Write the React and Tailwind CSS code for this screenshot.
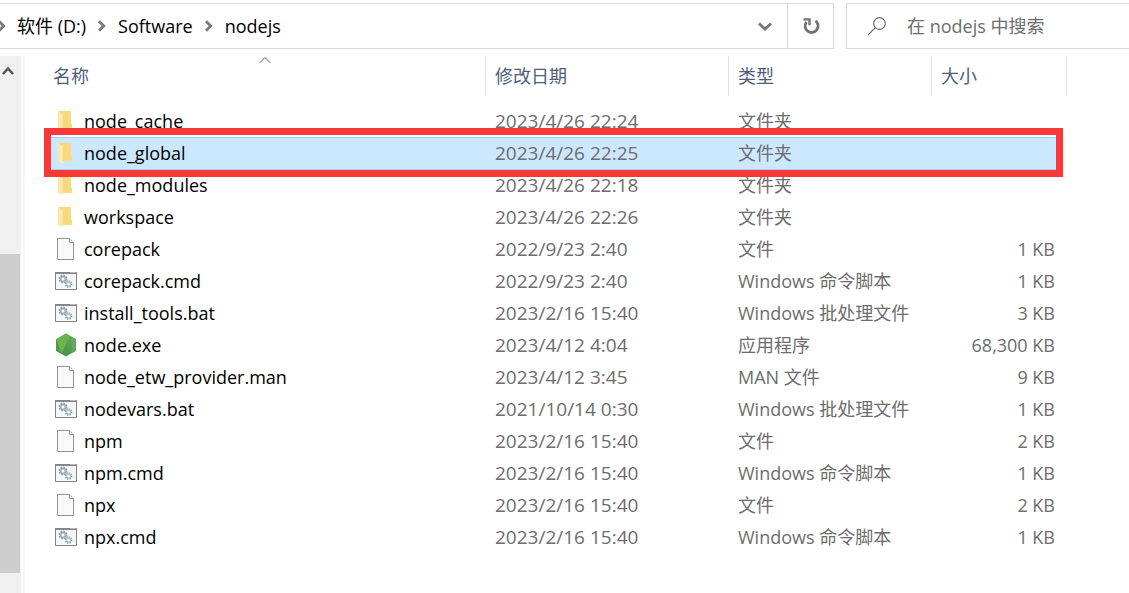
import { useState } from 'react';
import clsx from 'clsx';

const FILES = [
  { name: 'node_cache', date: '2023/4/26 22:24', type: '文件夹', icon: 'folder' },
  { name: 'node_global', date: '2023/4/26 22:25', type: '文件夹', icon: 'folder', selected: true },
  { name: 'node_modules', date: '2023/4/26 22:18', type: '文件夹', icon: 'folder' },
  { name: 'workspace', date: '2023/4/26 22:26', type: '文件夹', icon: 'folder' },
  { name: 'corepack', date: '2022/9/23 2:40', type: '文件', size: '1 KB', icon: 'file' },
  { name: 'corepack.cmd', date: '2022/9/23 2:40', type: 'Windows 命令脚本', size: '1 KB', icon: 'script' },
  { name: 'install_tools.bat', date: '2023/2/16 15:40', type: 'Windows 批处理文件', size: '3 KB', icon: 'script' },
  { name: 'node.exe', date: '2023/4/12 4:04', type: '应用程序', size: '68,300 KB', icon: 'node' },
  { name: 'node_etw_provider.man', date: '2023/4/12 3:45', type: 'MAN 文件', size: '9 KB', icon: 'file' },
  { name: 'nodevars.bat', date: '2021/10/14 0:30', type: 'Windows 批处理文件', size: '1 KB', icon: 'script' },
  { name: 'npm', date: '2023/2/16 15:40', type: '文件', size: '2 KB', icon: 'file' },
  { name: 'npm.cmd', date: '2023/2/16 15:40', type: 'Windows 命令脚本', size: '1 KB', icon: 'script' },
  { name: 'npx', date: '2023/2/16 15:40', type: '文件', size: '2 KB', icon: 'file' },
  { name: 'npx.cmd', date: '2023/2/16 15:40', type: 'Windows 命令脚本', size: '1 KB', icon: 'script' },
];

const FolderIcon = () => (
  <svg width="22" height="24" viewBox="0 0 22 24" aria-hidden="true">
    <defs>
      <linearGradient id="folderBack" x1="0" x2="1">
        <stop offset="0" stopColor="#f5d67c" />
        <stop offset="1" stopColor="#fadb86" />
      </linearGradient>
      <linearGradient id="folderFlap" x1="0" x2="1">
        <stop offset="0" stopColor="#fde5a0" />
        <stop offset="1" stopColor="#ffedbb" />
      </linearGradient>
    </defs>
    <path d="M4 2h12v12l1 1v5H4z" fill="url(#folderBack)" />
    <path d="M3 2l4.500 3v17.500L3 20z" fill="url(#folderFlap)" />
  </svg>
);

const FileIcon = () => (
  <svg width="22" height="24" viewBox="0 0 22 24" aria-hidden="true">
    <path d="M2.500 1.500h12l4 4v17h-16z" fill="#f9f9f9" stroke="#959595" />
    <path d="M14.500 1.500v4h4" fill="#fff" stroke="#959595" />
  </svg>
);

const ScriptIcon = () => (
  <svg width="22" height="24" viewBox="0 0 22 24" aria-hidden="true">
    <path d="M0.500 3.500h21v17h-21z" fill="#f6f6f6" stroke="#858585" />
    <path d="M0 3h22v2H0z" fill="#858585" />
    <path d="M15.500 3.500h1M17.500 3.500h1M19.500 3.500h1" stroke="#e4e4e4" />
    <circle cx="8" cy="10" r="3.700" fill="none" stroke="#8b959c" strokeWidth="1.400" strokeDasharray="1.500 1.400" />
    <circle cx="8" cy="10" r="2.500" fill="#fff" stroke="#a3adb3" strokeWidth="1.800" />
    <circle cx="13.500" cy="15" r="3.200" fill="none" stroke="#8199a8" strokeWidth="1.300" strokeDasharray="1.300 1.200" />
    <circle cx="13.500" cy="15" r="2.100" fill="#fff" stroke="#a9bfcc" strokeWidth="1.500" />
  </svg>
);

const NodeIcon = () => (
  <svg width="22" height="24" viewBox="0 0 22 24" aria-hidden="true">
    <defs>
      <linearGradient id="nodeFace" x1="0" y1="1" x2="1" y2="0">
        <stop offset="0" stopColor="#3f8b3d" />
        <stop offset="1" stopColor="#6cad5c" />
      </linearGradient>
    </defs>
    <path d="M11 0.500l10 5.800v11.400L11 23.500 1 17.700V6.300z" fill="url(#nodeFace)" />
    <path d="M11 0.500l4 2.300L6.500 20.900 1 6.300z" fill="#6bb34b" />
    <path d="M1 6.300l5.500 14.600L1 17.700z" fill="#4c9a41" />
    <path d="M21 6.300v11.400l-3 1.700L15 2.800z" fill="#6aa565" />
  </svg>
);

const ICONS = { folder: FolderIcon, file: FileIcon, script: ScriptIcon, node: NodeIcon };

const Crumb = () => (
  <svg width="8" height="12" viewBox="0 0 8 12" fill="none" stroke="#7a7a7a" strokeWidth="2.800" aria-hidden="true">
    <path d="M1 1.200L5.800 6 1 10.800" />
  </svg>
);

const AddressBar = () => (
  <div className="flex min-w-0 flex-1 border border-l-0 border-[#d9d9d9]">
    <nav className="flex min-w-0 flex-1 items-center overflow-hidden whitespace-nowrap text-black">
      <span className="-ml-0.5 mr-[11px]"><Crumb /></span>
      <a href="#d">软件 (D:)</a>
      <span className="mx-3"><Crumb /></span>
      <a href="#software">Software</a>
      <span className="mx-3"><Crumb /></span>
      <a href="#nodejs">nodejs</a>
    </nav>
    <button type="button" aria-label="以前的位置" className="flex w-11 items-center justify-center">
      <svg width="14" height="9" viewBox="0 0 14 9" fill="none" stroke="#767676" strokeWidth="2.800">
        <path d="M1 1.500l6 5.500 6-5.500" />
      </svg>
    </button>
    <button type="button" aria-label="刷新" className="flex w-[46px] items-center justify-center border-l border-[#d9d9d9]">
      <svg width="18" height="18" viewBox="0 0 18 18" fill="none" stroke="#737373" strokeWidth="2.800">
        <path d="M13.500 3.800A6.500 6.500 0 1 1 4.500 5" />
        <path d="M1.500 2.400h6v5.800" strokeWidth="2.400" />
      </svg>
    </button>
  </div>
);

const SearchBox = () => {
  const [query, setQuery] = useState('');

  return (
    <label className="flex w-[283px] items-center gap-5 border border-r-0 border-[#d9d9d9] pl-5">
      <svg width="20" height="20" viewBox="0 0 20 20" fill="none" stroke="#6d6d6d" strokeWidth="1.200" className="shrink-0">
        <circle cx="12.500" cy="7.500" r="5.800" />
        <path d="M8.300 11.700L1 19" />
      </svg>
      <input
        type="text"
        aria-label="搜索"
        placeholder="在 nodejs 中搜索"
        value={query}
        onChange={(e) => setQuery(e.target.value)}
        className="min-w-0 flex-1 outline-none placeholder:text-[#6d6d6d]"
      />
    </label>
  );
};

const HeaderCell = ({ label, sorted, className }) => (
  <th className={clsx('relative p-0 pb-[9px] text-left font-normal', className)}>
    {sorted && (
      <svg width="12" height="7" viewBox="0 0 12 7" fill="none" stroke="#666" className="absolute top-px left-1/2 -translate-x-1/2">
        <path d="M0.500 6L6 0.500 11.500 6" />
      </svg>
    )}
    <button type="button" className="h-10 w-full border-r border-[#e2e2e2] pl-[9px] text-left text-[#4c607a]">
      {label}
    </button>
  </th>
);

const FileRow = ({ file }) => {
  const Icon = ICONS[file.icon];

  return (
    <tr className={clsx('h-8', file.selected && 'relative z-10')}>
      <td className="p-0 pl-[11px]">
        {file.selected && (
          <>
            <span className="absolute top-0 right-[11px] -bottom-px left-[7px] -z-10 border-y border-[#99d1ff] bg-[#cce8ff]" />
            <span className="pointer-events-none absolute -top-[9px] right-1 -bottom-2 left-0 z-10 border-7 border-[#fb3838]" />
          </>
        )}
        <div className="flex items-center gap-[7px] text-black">
          <Icon />
          <span>{file.name}</span>
        </div>
      </td>
      <td className="p-0 pl-[9px] text-[19px]">{file.date}</td>
      <td className="p-0 pl-[9px]">{file.type}</td>
      <td className="p-0 pr-3 text-right">{file.size}</td>
    </tr>
  );
};

const App = () => (
  <div className="flex h-screen flex-col overflow-hidden bg-white pt-[3px] font-['Open_Sans','Noto_Sans_CJK_SC',sans-serif] text-[18px] leading-8 text-[#6d6d6d]">
    <header className="flex h-[46px] shrink-0 gap-3">
      <AddressBar />
      <SearchBox />
    </header>

    <div className="mt-[7px] flex min-h-0 flex-1">
      <div className="flex w-[21px] shrink-0 flex-col bg-[#f0f0f0] pt-2.5 pr-px pb-5">
        <button type="button" aria-label="向上滚动" className="flex justify-center">
          <svg width="12" height="10" viewBox="0 0 12 10" fill="none" stroke="#555" strokeWidth="2.500" className="mr-1">
            <path d="M1 8l5-5.500L11 8" />
          </svg>
        </button>
        <div className="min-h-0 flex-[178]" />
        <div className="min-h-0 flex-[319] bg-[#cdcdcd]" />
      </div>
      <div className="ml-0.5 w-0.5 shrink-0 bg-[#f5f5f5]" />

      <main className="min-w-0 flex-1 pr-[62px] pl-[19px]">
        <table className="w-full table-fixed border-collapse whitespace-nowrap">
          <thead>
            <tr>
              <HeaderCell label="名称" sorted />
              <HeaderCell label="修改日期" className="w-[243px]" />
              <HeaderCell label="类型" className="w-[203px]" />
              <HeaderCell label="大小" className="w-[135px]" />
            </tr>
          </thead>
          <tbody>
            {FILES.map((file) => (
              <FileRow key={file.name} file={file} />
            ))}
          </tbody>
        </table>
      </main>
    </div>
  </div>
);

export default App;
